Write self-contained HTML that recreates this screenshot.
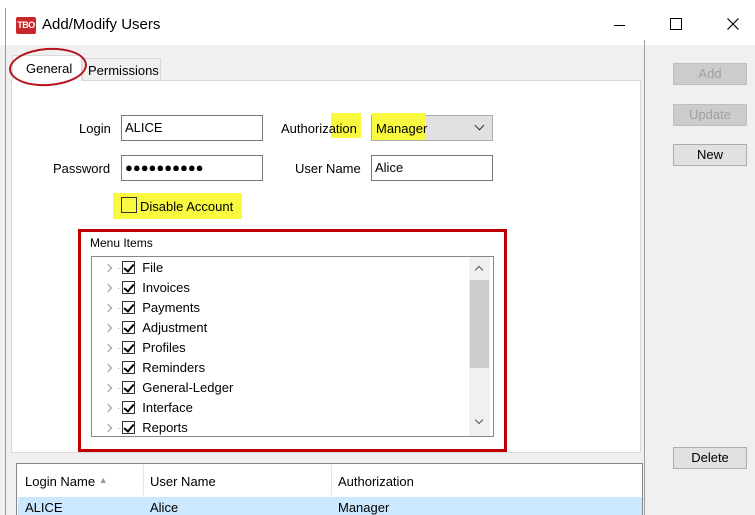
<!DOCTYPE html>
<html><head><meta charset="utf-8"><style>
*{margin:0;padding:0;box-sizing:border-box}
body{width:755px;height:515px;overflow:hidden;background:#f0f0f0;font-family:"Liberation Sans",sans-serif;font-size:13px;color:#000;position:relative}
.a{position:absolute}
.inp{position:absolute;background:#fff;border:1px solid #7a7a7a;padding:4px 3px;font-size:13px}
.btn{position:absolute;background:#e1e1e1;border:1px solid #adadad;text-align:center;font-size:13px;line-height:19px}
.dis{color:#a0a0a0;background:#cccccc;border-color:#bfbfbf}
.yl{position:absolute;background:#f9f940}
.row{position:absolute;left:13px;height:20px;font-size:13px}
.cb{display:inline-block;width:13px;height:13px;border:1px solid #333;background:#fff;position:relative;vertical-align:-2px}
.cb:after{content:"";position:absolute;left:3px;top:0px;width:4px;height:8px;border:solid #000;border-width:0 2px 2px 0;transform:rotate(40deg)}
.chev{display:inline-block;width:6px;height:6px;border:solid #999;border-width:1px 1px 0 0;transform:rotate(45deg);margin-right:7px;vertical-align:1px}
.dot{display:inline-block;width:1px;height:1px;background:#999;margin-right:3px;vertical-align:3px}
</style></head><body>
<div class="a" style="left:0;top:0;width:755px;height:45px;background:#fff"></div>
<div class="a" style="left:5px;top:8px;width:1px;height:507px;background:#6aa6e0"></div>
<div class="a" style="left:16px;top:17px;width:20px;height:17px;background:#c8262a;color:#fff;font-size:9px;font-weight:bold;text-align:center;line-height:17px;border-radius:2px;letter-spacing:-0.5px">TBO</div>
<div class="a" style="left:42px;top:16px;font-size:15px">Add/Modify Users</div>
<div class="a" style="left:614px;top:25px;width:11px;height:1px;background:#000"></div>
<div class="a" style="left:670px;top:18px;width:12px;height:12px;border:1px solid #000"></div>
<svg class="a" style="left:727px;top:18px" width="12" height="12"><path d="M0.5 0.5L11.5 11.5M11.5 0.5L0.5 11.5" stroke="#000" stroke-width="1.2"/></svg>

<!-- tabs -->
<div class="a" style="left:82px;top:58px;width:79px;height:23px;border:1px solid #d9d9d9;border-bottom:none;background:#f0f0f0;padding:4px 0 0 5px">Permissions</div>
<div class="a" style="left:11px;top:80px;width:630px;height:373px;background:#fff;border:1px solid #d9d9d9"></div>
<div class="a" style="left:12px;top:55px;width:70px;height:26px;background:#fff;border:1px solid #d9d9d9;border-bottom:none;padding:5px 0 0 13px">General</div>
<div class="a" style="left:9px;top:48px;width:78px;height:38px;border:2.5px solid #b5121b;border-radius:50%;transform:rotate(-4deg)"></div>
<div class="a" style="left:644px;top:40px;width:1px;height:475px;background:#a0a0a0"></div>

<!-- form -->
<div class="a" style="left:79px;top:121px">Login</div>
<div class="inp" style="left:121px;top:115px;width:142px;height:26px">ALICE</div>
<div class="a" style="left:53px;top:161px">Password</div>
<div class="inp" style="left:121px;top:155px;width:142px;height:26px;font-size:13px;line-height:16px">●●●●●●●●●●</div>
<div class="yl" style="left:331px;top:113px;width:30px;height:25px"></div>
<div class="a" style="left:281px;top:121px">Authorization</div>
<div class="a" style="left:371px;top:115px;width:122px;height:26px;background:#e1e1e1;border:1px solid #adadad"></div>
<div class="yl" style="left:372px;top:113px;width:54px;height:27px"></div>
<div class="a" style="left:376px;top:121px">Manager</div>
<div class="a" style="left:476px;top:122px;width:7px;height:7px;border:solid #333;border-width:0 1px 1px 0;transform:rotate(45deg)"></div>
<div class="a" style="left:295px;top:161px">User Name</div>
<div class="inp" style="left:371px;top:155px;width:122px;height:26px">Alice</div>
<div class="yl" style="left:113px;top:193px;width:129px;height:26px"></div>
<div class="a" style="left:121px;top:197px;width:16px;height:16px;border:1px solid #333"></div>
<div class="a" style="left:140px;top:199px">Disable Account</div>

<!-- menu items -->
<div class="a" style="left:78px;top:229px;width:429px;height:223px;border:3px solid #c00000"></div>
<div class="a" style="left:90px;top:236px;font-size:12px">Menu Items</div>
<div class="a" style="left:91px;top:256px;width:403px;height:181px;border:1px solid #828790;background:#fff;overflow:hidden">
<div class="row" style="top:3px"><span class="chev"></span><span class="dot"></span><span class="cb"></span>&nbsp;&nbsp;File</div>
<div class="row" style="top:23px"><span class="chev"></span><span class="dot"></span><span class="cb"></span>&nbsp;&nbsp;Invoices</div>
<div class="row" style="top:43px"><span class="chev"></span><span class="dot"></span><span class="cb"></span>&nbsp;&nbsp;Payments</div>
<div class="row" style="top:63px"><span class="chev"></span><span class="dot"></span><span class="cb"></span>&nbsp;&nbsp;Adjustment</div>
<div class="row" style="top:83px"><span class="chev"></span><span class="dot"></span><span class="cb"></span>&nbsp;&nbsp;Profiles</div>
<div class="row" style="top:103px"><span class="chev"></span><span class="dot"></span><span class="cb"></span>&nbsp;&nbsp;Reminders</div>
<div class="row" style="top:123px"><span class="chev"></span><span class="dot"></span><span class="cb"></span>&nbsp;&nbsp;General-Ledger</div>
<div class="row" style="top:143px"><span class="chev"></span><span class="dot"></span><span class="cb"></span>&nbsp;&nbsp;Interface</div>
<div class="row" style="top:163px"><span class="chev"></span><span class="dot"></span><span class="cb"></span>&nbsp;&nbsp;Reports</div>
<div class="a" style="left:377px;top:0;width:21px;height:179px;background:#f0f0f0"></div>
<div class="a" style="left:378px;top:23px;width:19px;height:88px;background:#cdcdcd"></div>
<div class="a" style="left:384px;top:10px;width:6px;height:6px;border:solid #555;border-width:1.5px 0 0 1.5px;transform:rotate(45deg)"></div>
<div class="a" style="left:384px;top:160px;width:6px;height:6px;border:solid #555;border-width:0 1.5px 1.5px 0;transform:rotate(45deg)"></div>
</div>

<!-- buttons -->
<div class="btn dis" style="left:673px;top:63px;width:74px;height:22px">Add</div>
<div class="btn dis" style="left:673px;top:104px;width:74px;height:22px">Update</div>
<div class="btn" style="left:673px;top:144px;width:74px;height:22px">New</div>
<div class="btn" style="left:673px;top:447px;width:74px;height:22px">Delete</div>

<!-- list -->
<div class="a" style="left:16px;top:463px;width:627px;height:52px;border:1px solid #828790;border-bottom:none;background:#fff"></div>
<div class="a" style="left:143px;top:465px;width:1px;height:30px;background:#e5e5e5"></div>
<div class="a" style="left:331px;top:465px;width:1px;height:30px;background:#e5e5e5"></div>
<div class="a" style="left:25px;top:474px">Login Name <span style="color:#999;font-size:9px;vertical-align:3px">▲</span></div>
<div class="a" style="left:150px;top:474px">User Name</div>
<div class="a" style="left:338px;top:474px">Authorization</div>
<div class="a" style="left:18px;top:497px;width:624px;height:18px;background:#cce8ff"></div>
<div class="a" style="left:25px;top:500px">ALICE</div>
<div class="a" style="left:150px;top:500px">Alice</div>
<div class="a" style="left:338px;top:500px">Manager</div>
</body></html>
